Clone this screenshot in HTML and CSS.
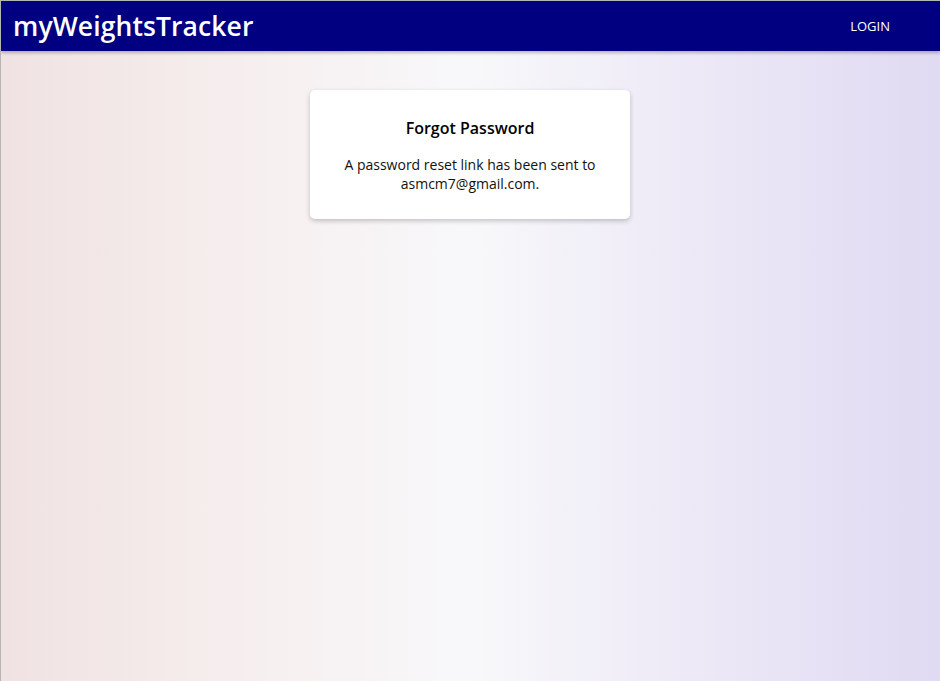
FILE: index.html
```html
<!DOCTYPE html>
<html lang="en">
<head>
<meta charset="utf-8">
<title>myWeightsTracker</title>
<link rel="stylesheet" href="styles.css">
</head>
<body>
<div class="page">
  <header class="topbar">
    <div class="brand">myWeightsTracker</div>
    <a class="login" href="#">LOGIN</a>
  </header>
  <main class="content">
    <section class="card">
      <h1 class="card-title">Forgot Password</h1>
      <p class="card-text">A password reset link has been sent to asmcm7@gmail.com.</p>
    </section>
  </main>
</div>
</body>
</html>
```

FILE: styles.css
```css
html, body {
  margin: 0;
  padding: 0;
  height: 100%;
}
body {
  font-family: "Open Sans", "Noto Sans", sans-serif;
  box-sizing: border-box;
  border-top: 1px solid #b4b4b4;
  border-left: 1px solid #b4b4b4;
  background: linear-gradient(90deg, #f0e2e2 0%, #f6eeee 25%, #f8f8fa 50%, #ece8f6 75%, #e0daf2 100%);
  overflow: hidden;
}
.page {
  min-height: 100%;
  display: flex;
  flex-direction: column;
}
.topbar {
  height: 50px;
  background: #000080;
  display: flex;
  align-items: center;
  justify-content: space-between;
  padding: 0 50px 0 12px;
  box-shadow: 0 2px 3px rgba(0, 0, 0, 0.25);
}
.brand {
  color: #ffffff;
  font-size: 26.5px;
  font-weight: 600;
  letter-spacing: 0.1px;
}
.login {
  color: #ffffff;
  text-decoration: none;
  font-size: 13px;
  font-weight: 400;
}
.content {
  display: flex;
  justify-content: center;
  padding-top: 39px;
}
.card {
  width: 320px;
  box-sizing: border-box;
  background: #ffffff;
  border-radius: 5px;
  box-shadow: 0 2px 5px rgba(0, 0, 0, 0.22);
  padding: 27px 30px 26px;
  text-align: center;
  margin-left: -1px;
}
.card-title {
  margin: 0 0 16px;
  font-size: 16px;
  font-weight: 600;
  color: #000000;
}
.card-text {
  margin: 0;
  font-size: 14px;
  line-height: 19px;
  color: #111111;
}
```
